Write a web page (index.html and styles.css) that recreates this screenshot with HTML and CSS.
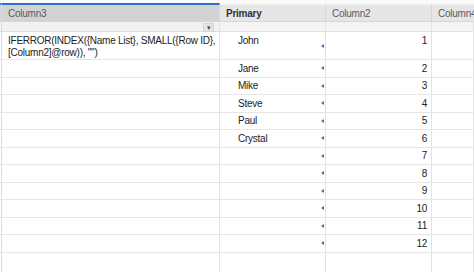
FILE: index.html
```html
<!DOCTYPE html>
<html lang="en">
<head>
    <meta charset="UTF-8">
    <meta name="viewport" content="width=device-width, initial-scale=1.0">
    <title>Sheet</title>
    <link rel="stylesheet" href="styles.css">
</head>
<body>
    <div class="top-strip"></div>
    <table class="grid">
        <colgroup>
            <col class="w-stub">
            <col class="w-c3">
            <col class="w-prim">
            <col class="w-c2">
            <col class="w-c4">
        </colgroup>
        <thead>
            <tr class="head">
                <th class="stub sel"></th>
                <th class="sel">Column3</th>
                <th class="prim">Primary</th>
                <th>Column2</th>
                <th class="last">Column4</th>
            </tr>
            <tr class="filter">
                <td class="stub"></td>
                <td class="c3f"><span class="drop">&#9662;</span></td>
                <td></td>
                <td></td>
                <td></td>
            </tr>
        </thead>
        <tbody>
            <tr class="first">
                <td class="stub"></td>
                <td class="formula">IFERROR(INDEX({Name List}, SMALL({Row ID},<br>[Column2]@row)), "")</td>
                <td class="name">John<i class="mark"></i></td>
                <td class="num">1</td>
                <td></td>
            </tr>
            <tr><td class="stub"></td><td></td><td class="name">Jane<i class="mark"></i></td><td class="num">2</td><td></td></tr>
            <tr><td class="stub"></td><td></td><td class="name">Mike<i class="mark"></i></td><td class="num">3</td><td></td></tr>
            <tr><td class="stub"></td><td></td><td class="name">Steve<i class="mark"></i></td><td class="num">4</td><td></td></tr>
            <tr><td class="stub"></td><td></td><td class="name">Paul<i class="mark"></i></td><td class="num">5</td><td></td></tr>
            <tr><td class="stub"></td><td></td><td class="name">Crystal<i class="mark"></i></td><td class="num">6</td><td></td></tr>
            <tr><td class="stub"></td><td></td><td class="name"><i class="mark"></i></td><td class="num">7</td><td></td></tr>
            <tr><td class="stub"></td><td></td><td class="name"><i class="mark"></i></td><td class="num">8</td><td></td></tr>
            <tr><td class="stub"></td><td></td><td class="name"><i class="mark"></i></td><td class="num">9</td><td></td></tr>
            <tr><td class="stub"></td><td></td><td class="name"><i class="mark"></i></td><td class="num">10</td><td></td></tr>
            <tr><td class="stub"></td><td></td><td class="name"><i class="mark"></i></td><td class="num">11</td><td></td></tr>
            <tr><td class="stub"></td><td></td><td class="name"><i class="mark"></i></td><td class="num">12</td><td></td></tr>
            <tr class="empty"><td class="stub"></td><td></td><td class="name"></td><td></td><td></td></tr>
        </tbody>
    </table>
</body>
</html>
```

FILE: styles.css
```css
html, body {
    margin: 0;
    padding: 0;
    background: #fff;
    overflow: hidden;
    font-family: "Liberation Sans", Arial, sans-serif;
    color: #222;
}
.top-strip {
    height: 3px;
    background: #fafafa;
}
.grid {
    border-collapse: separate;
    border-spacing: 0;
    table-layout: fixed;
    width: 474px;
    font-size: 10px;
    letter-spacing: -0.25px;
}
.w-stub { width: 2px; }
.w-c3 { width: 218px; }
.w-prim { width: 106px; }
.w-c2 { width: 106px; }
.w-c4 { width: 42px; }
.grid th,
.grid td {
    box-sizing: border-box;
    padding: 0;
    border-right: 1px solid #e3e3e3;
    border-bottom: 1px solid #e6e6e6;
    position: relative;
    white-space: nowrap;
}
.grid .stub {
    border-right: 1px solid #dcdcdc;
}
.head th {
    height: 19px;
    border-top: 2px solid #f4f4f4;
    background: #e6e6e6;
    color: #5a5a5a;
    font-weight: normal;
    text-align: left;
    padding-left: 6px;
    border-right-color: #d8d8d8;
    border-bottom-color: #d6d6d6;
}
.head th.stub {
    padding: 0;
}
.head th.last {
    overflow: hidden;
    border-right: none;
}
.head th.sel {
    background: #d3d3d3;
    border-top-color: #2f6fd0;
}
.head th.prim {
    font-weight: bold;
    color: #333;
}
.filter td {
    height: 10px;
    background: #f4f4f4;
    border-bottom-color: #e0e0e0;
}
.filter td.c3f {
    background: #f1f1f1;
}
.drop {
    position: absolute;
    right: 5px;
    top: 1px;
    width: 9px;
    height: 7px;
    background: #e4e4e4;
    border: 1px solid #d6d6d6;
    font-size: 7px;
    line-height: 7px;
    text-align: center;
    color: #444;
}
tbody tr {
    height: 17.5px;
}
tbody tr.first {
    height: 28px;
}
tbody tr.first td {
    vertical-align: top;
    padding-top: 3px;
    line-height: 12px;
}
tbody tr.empty {
    height: 24px;
}
.formula {
    padding-left: 6px !important;
}
.name {
    padding-left: 18px !important;
}
.num {
    text-align: right;
    padding-right: 4px !important;
}
.mark {
    position: absolute;
    right: 1px;
    top: 50%;
    margin-top: -2px;
    width: 0;
    height: 0;
    border-top: 2px solid transparent;
    border-bottom: 2px solid transparent;
    border-right: 3px solid #3a72c8;
}
```
